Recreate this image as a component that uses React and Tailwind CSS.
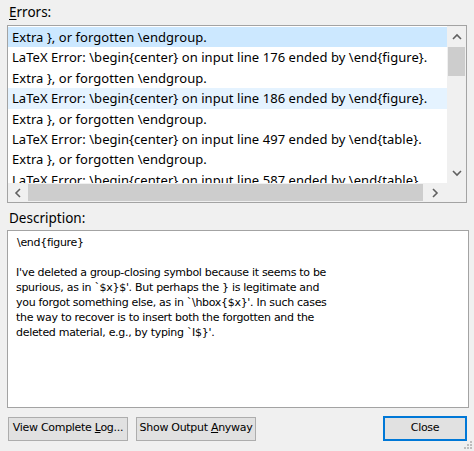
import React from "react";

const rows = [
  { t: "Extra }, or forgotten \\endgroup.", bg: "bg-[#cce8ff]" },
  { t: "LaTeX Error: \\begin{center} on input line 176 ended by \\end{figure}.", bg: "" },
  { t: "Extra }, or forgotten \\endgroup.", bg: "" },
  { t: "LaTeX Error: \\begin{center} on input line 186 ended by \\end{figure}.", bg: "bg-[#e5f3ff]" },
  { t: "Extra }, or forgotten \\endgroup.", bg: "" },
  { t: "LaTeX Error: \\begin{center} on input line 497 ended by \\end{table}.", bg: "" },
  { t: "Extra }, or forgotten \\endgroup.", bg: "" },
  { t: "LaTeX Error: \\begin{center} on input line 587 ended by \\end{table}.", bg: "" },
];

const Chevron = ({ dir }) => {
  const d = {
    up: "M1 6 L5 2 L9 6",
    down: "M1 2 L5 6 L9 2",
    left: "M6 1 L2 5 L6 9",
    right: "M2 1 L6 5 L2 9",
  }[dir];
  const vb = dir === "up" || dir === "down" ? "0 0 10 8" : "0 0 8 10";
  const w = dir === "up" || dir === "down" ? 10 : 8;
  const h = dir === "up" || dir === "down" ? 8 : 10;
  return (
    <svg width={w} height={h} viewBox={vb}>
      <path d={d} fill="none" stroke="#606060" strokeWidth="1.6" />
    </svg>
  );
};

const seg = { fontFamily: '"Noto Sans", "Open Sans", sans-serif' };
const tah = { fontFamily: '"DejaVu Sans", Verdana, sans-serif' };

export default function App() {
  return (
    <div className="w-[474px] h-[451px] bg-[#f0f0f0] relative overflow-hidden text-black">
      <div className="pl-[9px] pt-[3px] h-[25px] text-[13.5px] leading-[18px]" style={seg}>
        <span className="underline underline-offset-2">E</span>rrors:
      </div>
      <div className="ml-[7px] w-[460px] h-[178px] border border-[#a3a3a3] bg-white flex flex-col">
        <div className="flex flex-1 min-h-0">
          <div className="flex-1 overflow-hidden pt-[1px]">
            {rows.map((r, i) => (
              <div
                key={i}
                className={`h-[20.4px] pl-[4px] whitespace-nowrap text-[13px] leading-[20px] tracking-[0.05px] ${r.bg}`}
                style={seg}
              >
                {r.t}
              </div>
            ))}
          </div>
          <div className="w-[19px] bg-[#f0f0f0] flex flex-col">
            <div className="h-[21px] flex items-center justify-center">
              <Chevron dir="up" />
            </div>
            <div className="h-[29px] mx-[1px] bg-[#cdcdcd]" />
            <div className="flex-1" />
            <div className="h-[20px] flex items-center justify-center">
              <Chevron dir="down" />
            </div>
          </div>
        </div>
        <div className="h-[19px] flex">
          <div className="flex-1 bg-[#f0f0f0] flex items-center">
            <div className="w-[20px] flex justify-center">
              <Chevron dir="left" />
            </div>
            <div className="h-[17px] w-[395px] bg-[#cdcdcd]" />
            <div className="flex-1 flex justify-center">
              <Chevron dir="right" />
            </div>
          </div>
          <div className="w-[19px] bg-[#f0f0f0]" />
        </div>
      </div>
      <div className="pl-[9px] pt-[6px] h-[27px] text-[13.5px] leading-[18px]" style={seg}>
        Description:
      </div>
      <div
        className="ml-[7px] w-[462px] h-[178px] border border-[#a3a3a3] bg-white pl-[8px] pt-[4px] text-[11px] leading-[15px] whitespace-pre tracking-[-0.3px]"
        style={tah}
      >
        <div className="pl-[1px]">\end{"{"}figure{"}"}</div>
        <div className="mt-[15px]">
          {"I've deleted a group-closing symbol because it seems to be\nspurious, as in `$x}$'. But perhaps the } is legitimate and\nyou forgot something else, as in `\\hbox{$x}'. In such cases\nthe way to recover is to insert both the forgotten and the\ndeleted material, e.g., by typing `I$}'."}
        </div>
      </div>
      <div className="flex items-center mt-[8px] px-[8px] h-[25px] text-[11px] tracking-[-0.3px]" style={tah}>
        <div className="w-[120px] h-[24px] border border-[#adadad] bg-[#e1e1e1] flex items-center justify-center whitespace-pre">
          <span>
            View Complete <span className="underline">L</span>og...
          </span>
        </div>
        <div className="ml-[8px] w-[120px] h-[24px] border border-[#adadad] bg-[#e1e1e1] flex items-center justify-center whitespace-pre">
          <span>
            Show Output <span className="underline">A</span>nyway
          </span>
        </div>
        <div className="flex-1" />
        <div className="w-[84px] h-[25px] border-2 border-[#0078d7] bg-[#e1e1e1] flex items-center justify-center mr-[-1px]">
          Close
        </div>
      </div>
      <svg className="absolute right-[1px] bottom-[1px]" width="11" height="11" viewBox="0 0 11 11">
        {[[8, 2], [5, 5], [8, 5], [2, 8], [5, 8], [8, 8]].map(([x, y], i) => (
          <rect key={i} x={x} y={y} width="2" height="2" fill="#bdbdbd" />
        ))}
      </svg>
    </div>
  );
}
